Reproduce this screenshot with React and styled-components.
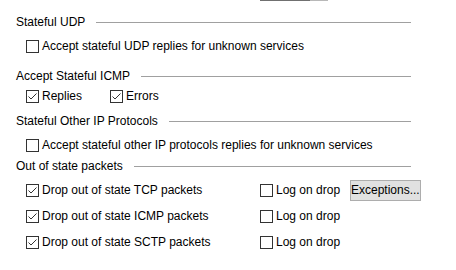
import React from "react";
import styled, { createGlobalStyle } from "styled-components";

const Global = createGlobalStyle`
  html, body {
    margin: 0;
    padding: 0;
    background: #fff;
  }
  body {
    font-family: "Liberation Sans", Arial, sans-serif;
    font-size: 12px;
    color: #000;
  }
`;

const Page = styled.div`
  width: 456px;
  height: 270px;
  overflow: hidden;
  background: #fff;
  display: flex;
  flex-direction: column;
`;

const TopStrip = styled.div`
  display: flex;
  height: 2px;
  padding-left: 260px;
`;

const StripPart = styled.div`
  width: ${(p) => p.$w}px;
  height: 1px;
  background: ${(p) => p.$c};
`;

const Section = styled.div`
  width: 395px;
  padding-left: 16px;
  display: flex;
  flex-direction: column;
  margin-top: ${(p) => p.$top}px;
`;

const Heading = styled.div`
  display: flex;
  align-items: center;
  gap: 11px;
  height: 16px;
  line-height: 16px;
  white-space: nowrap;
`;

const Rule = styled.div`
  flex: 1;
  height: 0;
  border-top: 1px solid #a0a0a0;
`;

const Row = styled.div`
  display: flex;
  align-items: center;
  height: 13px;
  padding-left: 10px;
  margin-top: ${(p) => p.$top}px;
`;

const Cell = styled.div`
  width: ${(p) => (p.$w ? `${p.$w}px` : "auto")};
  flex-shrink: 0;
  display: flex;
  align-items: center;
`;

const Label = styled.label`
  display: flex;
  align-items: center;
  gap: 3px;
  height: 13px;
  line-height: 13px;
  white-space: nowrap;
`;

const Box = styled.span`
  width: 11px;
  height: 11px;
  border: 1px solid #333;
  background: #fff;
  display: inline-flex;
  align-items: center;
  justify-content: center;
  flex-shrink: 0;
`;

const Button = styled.button`
  width: 73px;
  height: 21px;
  padding: 0 0 1px;
  margin-top: 0;
  background: #e1e1e1;
  border: 1px solid #adadad;
  font-family: "Liberation Sans", Arial, sans-serif;
  font-size: 12px;
  color: #000;
`;

const Check = ({ checked, children }) => (
  <Label>
    <Box>
      {checked && (
        <svg width="11" height="11" viewBox="0 0 11 11">
          <path d="M1.5 5.5 L4 8 L9.5 2.5" fill="none" stroke="#333" strokeWidth="1" />
        </svg>
      )}
    </Box>
    {children}
  </Label>
);

const DropRow = ({ top, text, button }) => (
  <Row $top={top}>
    <Cell $w={234}>
      <Check checked>{text}</Check>
    </Cell>
    <Cell $w={90}>
      <Check>Log on drop</Check>
    </Cell>
    {button && <Button>Exceptions...</Button>}
  </Row>
);

export default function App() {
  return (
    <Page>
      <Global />
      <TopStrip>
        <StripPart $w={50} $c="#707070" />
        <StripPart $w={18} $c="#b8b8b8" />
      </TopStrip>

      <Section $top={12}>
        <Heading>
          Stateful UDP
          <Rule />
        </Heading>
        <Row $top={10}>
          <Check>Accept stateful UDP replies for unknown services</Check>
        </Row>
      </Section>

      <Section $top={15}>
        <Heading>
          Accept Stateful ICMP
          <Rule />
        </Heading>
        <Row $top={6}>
          <Cell $w={84}>
            <Check checked>Replies</Check>
          </Cell>
          <Check checked>Errors</Check>
        </Row>
      </Section>

      <Section $top={10}>
        <Heading>
          Stateful Other IP Protocols
          <Rule />
        </Heading>
        <Row $top={10}>
          <Check>Accept stateful other IP protocols replies for unknown services</Check>
        </Row>
      </Section>

      <Section $top={6}>
        <Heading>
          Out of state packets
          <Rule />
        </Heading>
        <DropRow top={10} text="Drop out of state TCP packets" button />
        <DropRow top={13} text="Drop out of state ICMP packets" />
        <DropRow top={13} text="Drop out of state SCTP packets" />
      </Section>
    </Page>
  );
}
